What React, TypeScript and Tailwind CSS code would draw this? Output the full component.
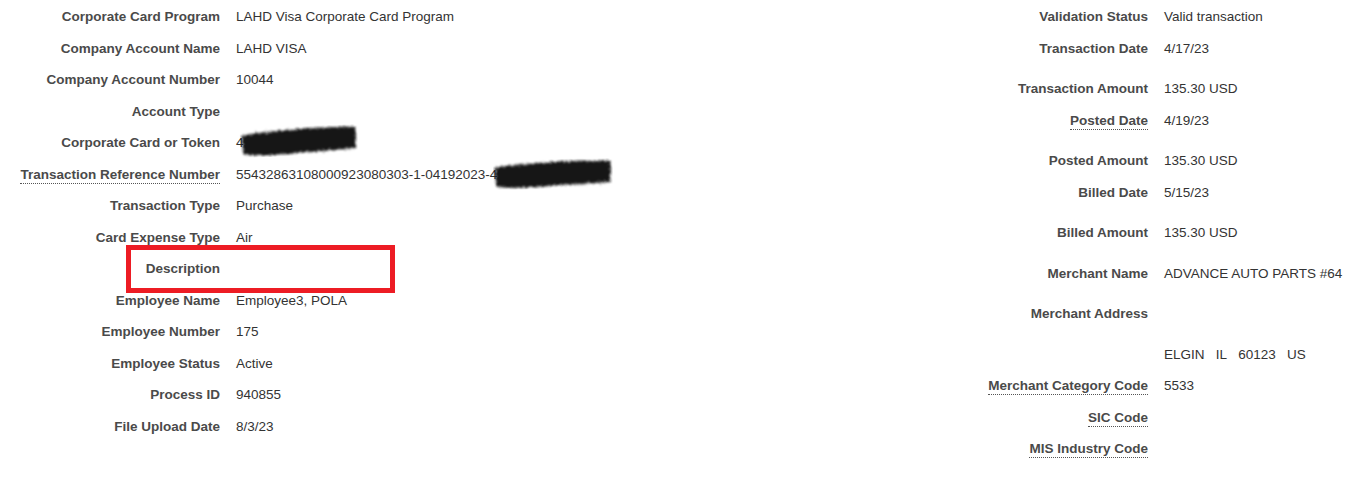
import type { ReactNode } from 'react';

type Field = {
  label: string;
  value?: ReactNode;
  tip?: boolean;
  h?: string;
};

const Scribble = ({ className }: { className: string }) => (
  <span className={`pointer-events-none absolute ${className}`}>
    <svg viewBox="0 0 120 30" preserveAspectRatio="none" className="h-full w-full">
      <defs>
        <filter id="smudge" x="-10%" y="-30%" width="120%" height="160%">
          <feTurbulence type="fractalNoise" baseFrequency="1.2" numOctaves="2" result="n" />
          <feDisplacementMap in="SourceGraphic" in2="n" scale="6" />
          <feGaussianBlur stdDeviation="1" />
        </filter>
      </defs>
      <path
        d="M2 8 C20 4 40 5 60 3 C80 2 100 2 118 3 L117 24 C96 25 70 26 50 27 C30 29 14 28 3 27 Z"
        fill="#151515"
        filter="url(#smudge)"
      />
    </svg>
  </span>
);

const left: Field[] = [
  { label: 'Corporate Card Program', value: 'LAHD Visa Corporate Card Program' },
  { label: 'Company Account Name', value: 'LAHD VISA' },
  { label: 'Company Account Number', value: '10044' },
  { label: 'Account Type' },
  {
    label: 'Corporate Card or Token',
    value: (
      <span className="relative inline-block">
        49
        <Scribble className="-top-[9px] left-[4px] h-[30px] w-[118px] -rotate-2" />
      </span>
    ),
  },
  {
    label: 'Transaction Reference Number',
    tip: true,
    value: (
      <span className="relative inline-block">
        55432863108000923080303-1-04192023-49
        <Scribble className="-top-[8px] left-[257px] h-[30px] w-[120px] -rotate-1" />
      </span>
    ),
  },
  { label: 'Transaction Type', value: 'Purchase' },
  { label: 'Card Expense Type', value: 'Air' },
  { label: 'Description' },
  { label: 'Employee Name', value: 'Employee3, POLA' },
  { label: 'Employee Number', value: '175' },
  { label: 'Employee Status', value: 'Active' },
  { label: 'Process ID', value: '940855' },
  { label: 'File Upload Date', value: '8/3/23' },
];

const right: Field[] = [
  { label: 'Validation Status', value: 'Valid transaction', h: 'h-[32px]' },
  { label: 'Transaction Date', value: '4/17/23', h: 'h-[40px]' },
  { label: 'Transaction Amount', value: '135.30 USD', h: 'h-[32px]' },
  { label: 'Posted Date', value: '4/19/23', tip: true, h: 'h-[40px]' },
  { label: 'Posted Amount', value: '135.30 USD', h: 'h-[32px]' },
  { label: 'Billed Date', value: '5/15/23', h: 'h-[40px]' },
  { label: 'Billed Amount', value: '135.30 USD', h: 'h-[40.5px]' },
  { label: 'Merchant Name', value: 'ADVANCE AUTO PARTS #64', h: 'h-[40.5px]' },
  { label: 'Merchant Address', h: 'h-[40.5px]' },
  { label: '', value: 'ELGIN\u00a0\u00a0\u00a0IL\u00a0\u00a0\u00a060123\u00a0\u00a0\u00a0US', h: 'h-[31.5px]' },
  { label: 'Merchant Category Code', value: '5533', tip: true, h: 'h-[31.5px]' },
  { label: 'SIC Code', tip: true, h: 'h-[31.5px]' },
  { label: 'MIS Industry Code', tip: true, h: 'h-[31.5px]' },
];

const Row = ({ field, labelW }: { field: Field; labelW: string }) => (
  <div className={`flex items-start pt-[9px] ${field.h ?? 'h-[31.5px]'}`}>
    <div className={`${labelW} shrink-0 text-right font-bold leading-4 text-[#4a4a4a]`}>
      {field.label && (
        <span className={field.tip ? 'border-b border-dotted border-[#555] pb-[1px]' : ''}>
          {field.label}
        </span>
      )}
    </div>
    <div className="whitespace-nowrap pl-4 leading-4 text-[#333]">{field.value}</div>
  </div>
);

export default function App() {
  return (
    <div
      className="relative flex h-[483px] w-[1371px] bg-white text-[13.5px]"
      style={{ fontFamily: '"Liberation Sans", Arial, sans-serif' }}
    >
      <div className="flex w-[700px] flex-col">
        {left.map((f) => (
          <Row key={f.label} field={f} labelW="w-[220px]" />
        ))}
      </div>
      <div className="flex flex-1 flex-col">
        {right.map((f, i) => (
          <Row key={i} field={f} labelW="w-[448px]" />
        ))}
      </div>
      <div className="pointer-events-none absolute left-[126px] top-[245px] h-[48px] w-[269px] border-[5px] border-[#ed1c24]" />
    </div>
  );
}
